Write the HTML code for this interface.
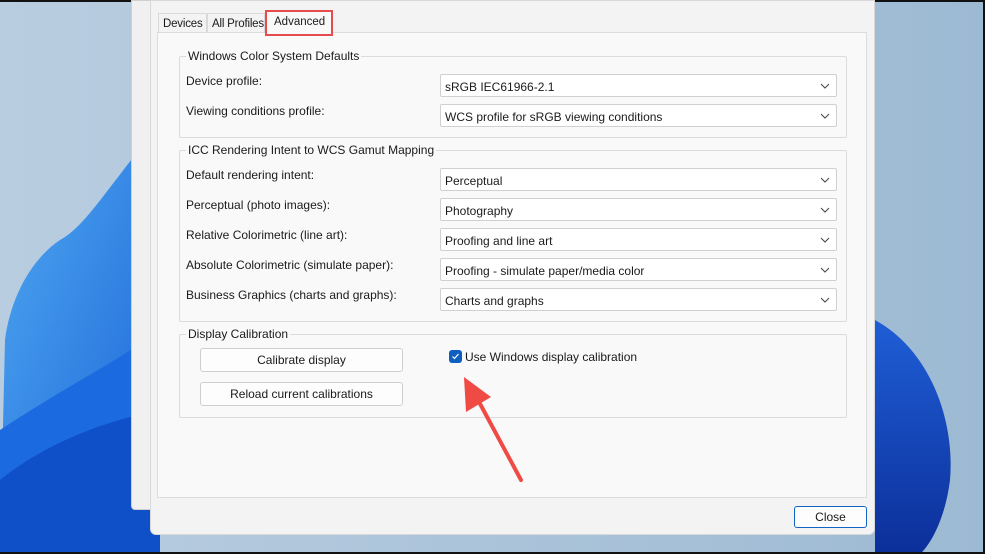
<!DOCTYPE html>
<html><head><style>
*{margin:0;padding:0;box-sizing:border-box}
body{width:985px;height:554px;overflow:hidden;position:relative;background:#a9c3da;font-family:"Liberation Sans",sans-serif;font-size:12px;color:#1a1a1a}
.abs{position:absolute;white-space:nowrap}
.gb{position:absolute;border:1px solid #dcdcdc;border-radius:2px}
.gt{position:absolute;top:-8px;left:6px;background:#f9f9f9;padding:0 2px;font-size:12px;white-space:nowrap}
.lbl{position:absolute;left:186px;font-size:12px;white-space:nowrap}
.cb{position:absolute;left:440px;width:397px;height:23px;background:#fff;border:1px solid #d0d0d0;border-radius:2px;padding:5px 0 0 4px;font-size:12px;white-space:nowrap}
.cb svg{position:absolute;right:6px;top:8px}
.btn{position:absolute;left:200px;width:203px;height:24px;background:#fdfdfd;border:1px solid #cfcfcf;border-radius:3px;text-align:center;line-height:22px;font-size:12px}
.tab{position:absolute;top:13px;height:20px;border:1px solid #d9d9d9;border-bottom:none;padding:4px 0 0 4px;font-size:11.5px;white-space:nowrap;letter-spacing:-0.2px}
</style></head><body>
<svg class="abs" style="left:0;top:0" width="985" height="554">
<defs>
<linearGradient id="bg" x1="0" y1="0" x2="1" y2="0"><stop offset="0" stop-color="#b9cde0"/><stop offset="1" stop-color="#9dbad3"/></linearGradient>
<linearGradient id="b1" x1="0" y1="0" x2="1" y2="1"><stop offset="0" stop-color="#4fa8f0"/><stop offset="1" stop-color="#1a62d8"/></linearGradient>
<linearGradient id="b2" x1="0" y1="0" x2="0" y2="1"><stop offset="0" stop-color="#1f5ed6"/><stop offset="1" stop-color="#0c2f9a"/></linearGradient>
</defs>
<rect width="985" height="554" fill="url(#bg)"/>
<path d="M135 155 C100 200 80 230 60 240 C30 260 10 300 5 340 L0 554 L160 554 L160 150 Z" fill="url(#b1)"/>
<path d="M0 430 C60 390 120 360 160 330 L160 554 L0 554Z" fill="#1c6ae0"/>
<path d="M0 554 L0 480 C50 440 110 420 160 410 L160 554Z" fill="#0f4fc8"/>
<path d="M875 320 C930 350 955 420 950 480 C945 520 930 545 920 554 L875 554Z" fill="url(#b2)"/>
<rect x="0" y="0" width="985" height="2" fill="#111"/>
<rect x="983" y="0" width="2" height="554" fill="#111"/>
<rect x="0" y="552" width="985" height="2" fill="#111"/>
</svg>
<div class="abs" style="left:131px;top:0;width:30px;height:510px;background:#f0f0f0;border:1px solid #cfcfcf;border-radius:0 0 4px 4px"></div>
<div class="abs" style="left:150px;top:0;width:725px;height:535px;background:#f3f3f3;border:1px solid #d8d8d8;border-radius:0 0 6px 6px"></div>
<div class="abs" style="left:157px;top:32px;width:710px;height:466px;background:#f9f9f9;border:1px solid #dcdcdc"></div>
<div class="tab" style="left:158px;width:49px">Devices</div>
<div class="tab" style="left:207px;width:58px">All Profiles</div>
<div class="abs" style="left:265px;top:10px;width:68px;height:26px;background:#f9f9f9;border:2px solid #e84b4b;padding:4px 0 0 7px;font-size:11.5px">Advanced</div>

<div class="gb" style="left:179px;top:56px;width:668px;height:82px"><span class="gt">Windows Color System Defaults</span></div>
<div class="lbl" style="top:74px">Device profile:</div>
<div class="cb" style="top:74px">sRGB IEC61966-2.1<svg width="10" height="6"><path d="M1 1l4 4 4-4" fill="none" stroke="#444"/></svg></div>
<div class="lbl" style="top:104px">Viewing conditions profile:</div>
<div class="cb" style="top:104px">WCS profile for sRGB viewing conditions<svg width="10" height="6"><path d="M1 1l4 4 4-4" fill="none" stroke="#444"/></svg></div>

<div class="gb" style="left:179px;top:150px;width:668px;height:172px"><span class="gt">ICC Rendering Intent to WCS Gamut Mapping</span></div>
<div class="lbl" style="top:168px">Default rendering intent:</div>
<div class="cb" style="top:168px">Perceptual<svg width="10" height="6"><path d="M1 1l4 4 4-4" fill="none" stroke="#444"/></svg></div>
<div class="lbl" style="top:198px">Perceptual (photo images):</div>
<div class="cb" style="top:198px">Photography<svg width="10" height="6"><path d="M1 1l4 4 4-4" fill="none" stroke="#444"/></svg></div>
<div class="lbl" style="top:228px">Relative Colorimetric (line art):</div>
<div class="cb" style="top:228px">Proofing and line art<svg width="10" height="6"><path d="M1 1l4 4 4-4" fill="none" stroke="#444"/></svg></div>
<div class="lbl" style="top:258px">Absolute Colorimetric (simulate paper):</div>
<div class="cb" style="top:258px">Proofing - simulate paper/media color<svg width="10" height="6"><path d="M1 1l4 4 4-4" fill="none" stroke="#444"/></svg></div>
<div class="lbl" style="top:288px">Business Graphics (charts and graphs):</div>
<div class="cb" style="top:288px">Charts and graphs<svg width="10" height="6"><path d="M1 1l4 4 4-4" fill="none" stroke="#444"/></svg></div>

<div class="gb" style="left:179px;top:334px;width:668px;height:84px"><span class="gt">Display Calibration</span></div>
<div class="btn" style="top:348px">Calibrate display</div>
<div class="btn" style="top:382px">Reload current calibrations</div>
<div class="abs" style="left:449px;top:350px;width:13px;height:13px;background:#0f5fc0;border-radius:3px"><svg width="13" height="13"><path d="M3.5 6.5l2 2 4-4.5" fill="none" stroke="#fff" stroke-width="1.2"/></svg></div>
<div class="abs" style="left:465px;top:350px">Use Windows display calibration</div>

<svg class="abs" style="left:0;top:0" width="985" height="554">
<path d="M521 480 L478 400" stroke="#ef4b44" stroke-width="4" stroke-linecap="round"/>
<path d="M464 377 L466 412 L491 397 Z" fill="#ef4b44"/>
</svg>
<div class="abs" style="left:794px;top:506px;width:73px;height:22px;background:#fdfdfd;border:1px solid #0f66c7;border-radius:3px;text-align:center;line-height:20px">Close</div>
</body></html>
